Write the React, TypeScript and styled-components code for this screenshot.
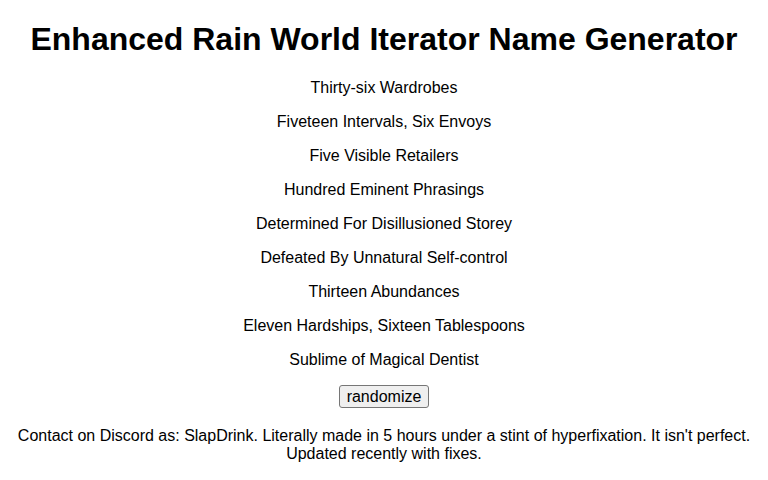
import React, { useState } from 'react'
import styled, { createGlobalStyle } from 'styled-components'

const GlobalStyle = createGlobalStyle`
  body {
    margin: 0;
    background: #ffffff;
    color: #000000;
    font-family: "Liberation Sans", Arial, sans-serif;
  }
`

const Page = styled.main`
  display: flex;
  flex-direction: column;
  align-items: center;
  text-align: center;
`

const Title = styled.h1`
  font-size: 32px;
  font-weight: bold;
  margin: 21px 0 21px 0;
`

const NameList = styled.div`
  display: flex;
  flex-direction: column;
  align-items: center;
`

const Name = styled.p`
  font-size: 16px;
  margin: 0 0 16px 0;
  line-height: 18px;
`

const ButtonRow = styled.div`
  margin-top: 0;
`

const RandomButton = styled.button`
  font-family: "Liberation Sans", Arial, sans-serif;
  font-size: 16px;
  color: #000;
  background: #efefef;
  border: 1px solid #767676;
  border-radius: 3px;
  padding: 1px 7px;
  height: 23px;
  cursor: pointer;

  &:hover {
    background: #e5e5e5;
  }
`

const Footer = styled.p`
  font-size: 16px;
  line-height: 18px;
  margin: 19px 16px 0 16px;
`

const names = [
  'Thirty-six Wardrobes',
  'Fiveteen Intervals, Six Envoys',
  'Five Visible Retailers',
  'Hundred Eminent Phrasings',
  'Determined For Disillusioned Storey',
  'Defeated By Unnatural Self-control',
  'Thirteen Abundances',
  'Eleven Hardships, Sixteen Tablespoons',
  'Sublime of Magical Dentist',
]

export default function App() {
  const [list, setList] = useState(names)

  const shuffle = () => {
    const next = [...list]
    for (let i = next.length - 1; i > 0; i--) {
      const j = Math.floor(Math.random() * (i + 1))
      ;[next[i], next[j]] = [next[j], next[i]]
    }
    setList(next)
  }

  return (
    <Page>
      <GlobalStyle />
      <Title>Enhanced Rain World Iterator Name Generator</Title>
      <NameList>
        {list.map((n) => (
          <Name key={n}>{n}</Name>
        ))}
      </NameList>
      <ButtonRow>
        <RandomButton onClick={shuffle}>randomize</RandomButton>
      </ButtonRow>
      <Footer>
        Contact on Discord as: SlapDrink. Literally made in 5 hours under a stint of hyperfixation. It isn't perfect.
        <br />
        Updated recently with fixes.
      </Footer>
    </Page>
  )
}
